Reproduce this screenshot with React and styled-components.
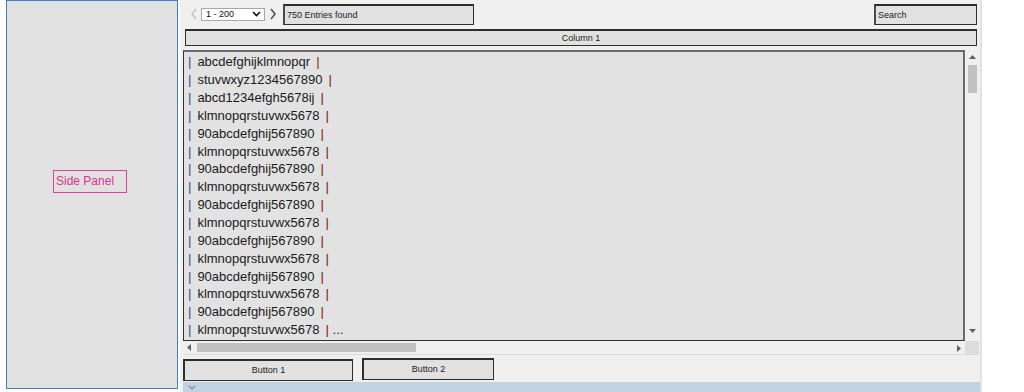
import styled, { createGlobalStyle } from "styled-components";

const GlobalStyle = createGlobalStyle`
  html, body {
    margin: 0;
    padding: 0;
    background: #ffffff;
    font-family: "Liberation Sans", Arial, sans-serif;
  }
`;

const Page = styled.div`
  display: flex;
  width: 1024px;
  height: 392px;
  padding-left: 6px;
  box-sizing: border-box;
  overflow: hidden;
`;

const SidePanel = styled.div`
  width: 172px;
  height: 389px;
  box-sizing: border-box;
  border: 1px solid #3f7fc4;
  background: #e1e1e1;
  display: flex;
  align-items: center;
  padding-left: 46px;
  flex-shrink: 0;
`;

const SideLabel = styled.div`
  border: 1px solid #e0409a;
  color: #e0308f;
  font-size: 12px;
  padding: 3px 12px 4px 2px;
  margin-top: -26px;
`;

const Main = styled.div`
  width: 802px;
  margin-left: 2px;
  height: 392px;
  background: #f0f0f0;
  border-right: 2px solid #e2e2e2;
  display: flex;
  flex-direction: column;
  padding-left: 3px;
  box-sizing: border-box;
  flex-shrink: 0;
`;

const Toolbar = styled.div`
  height: 29px;
  display: flex;
  align-items: center;
  padding-right: 3px;
`;

const Arrow = styled.span`
  width: 10px;
  height: 14px;
  display: flex;
  align-items: center;
  justify-content: center;
  margin: 0 ${(p) => p.$gap}px 0 ${(p) => p.$lead}px;
`;

const Select = styled.div`
  width: 64px;
  height: 13px;
  box-sizing: border-box;
  background: #ffffff;
  border: 1px solid #a8a8a8;
  font-size: 9px;
  display: flex;
  align-items: center;
  justify-content: space-between;
  padding: 0 3px 0 4px;
  color: #111;
`;

const FieldBox = styled.div`
  width: ${(p) => p.$w}px;
  height: 21px;
  box-sizing: border-box;
  border: 1px solid #2e2e2e;
  border-left-width: 2px;
  border-top-width: 2px;
  border-left-color: #4a4a4a;
  background: #e1e1e1;
  font-size: 9px;
  color: #222;
  display: flex;
  align-items: center;
  padding-left: 2px;
  margin-left: ${(p) => p.$ml || 0}px;
`;

const Spacer = styled.div`
  flex: 1;
`;

const Header = styled.div`
  height: 17px;
  margin: 1px 3px 0 2px;
  box-sizing: border-box;
  border: 1px solid #2e2e2e;
  border-top-width: 2px;
  background: #e1e1e1;
  font-size: 9px;
  color: #222;
  display: flex;
  align-items: center;
  justify-content: center;
`;

const ListArea = styled.div`
  margin-top: 4px;
  display: grid;
  grid-template-columns: 782px 14px;
  grid-template-rows: 291px 14px;
`;

const List = styled.div`
  box-sizing: border-box;
  border: 1px solid #303030;
  border-top: 2px solid #6a6a6a;
  border-right: 2px solid #6a6a6a;
  background: #e2e2e2;
  padding: 1px 0 0 4px;
  overflow: hidden;
`;

const Row = styled.div`
  height: 17.87px;
  display: flex;
  align-items: center;
  font-size: 13px;
  color: #1a1a1a;
  white-space: nowrap;
`;

const Pipe = styled.span`
  color: ${(p) => p.$c};
  margin: 0 ${(p) => p.$r}px 0 ${(p) => p.$l}px;
`;

const VScroll = styled.div`
  background: #f0f0f0;
  display: flex;
  flex-direction: column;
  align-items: center;
  padding-top: 4px;
`;

const VThumb = styled.div`
  width: 9px;
  height: 28px;
  margin-top: 4px;
  background: #c1c1c1;
`;

const HScroll = styled.div`
  background: #f0f0f0;
  border-bottom: 1px solid #dadada;
  display: flex;
  align-items: center;
  padding-left: 3px;
`;

const HThumb = styled.div`
  width: 219px;
  height: 9px;
  margin-left: 4px;
  background: #c1c1c1;
`;

const Corner = styled.div`
  background: #dcdcdc;
`;

const ButtonRow = styled.div`
  display: flex;
  gap: 9px;
  margin-top: 2px;
  height: 25px;
  align-items: flex-start;
`;

const Button = styled.button`
  width: ${(p) => p.$w}px;
  height: 22px;
  margin-top: ${(p) => p.$mt}px;
  box-sizing: border-box;
  border: 1px solid #2e2e2e;
  border-left-width: 2px;
  border-top-width: 2px;
  background: #e1e1e1;
  font-family: "Liberation Sans", Arial, sans-serif;
  font-size: 9px;
  color: #222;
  padding: 0;
`;

const BottomBar = styled.div`
  margin-top: 1px;
  margin-right: 0;
  height: 10px;
  background: #c1d3e1;
  display: flex;
  align-items: center;
  padding-left: 5px;
`;

const rows = [
  "abcdefghijklmnopqr",
  "stuvwxyz1234567890",
  "abcd1234efgh5678ij",
  "klmnopqrstuvwx5678",
  "90abcdefghij567890",
  "klmnopqrstuvwx5678",
  "90abcdefghij567890",
  "klmnopqrstuvwx5678",
  "90abcdefghij567890",
  "klmnopqrstuvwx5678",
  "90abcdefghij567890",
  "klmnopqrstuvwx5678",
  "90abcdefghij567890",
  "klmnopqrstuvwx5678",
  "90abcdefghij567890",
  "klmnopqrstuvwx5678",
];

function Chevron({ dir, color }) {
  const d = dir === "left" ? "M6 1 L2 6 L6 11" : "M2 1 L6 6 L2 11";
  return (
    <svg width="8" height="12" viewBox="0 0 8 12">
      <path d={d} fill="none" stroke={color} strokeWidth="1.6" />
    </svg>
  );
}

function Tri({ dir, size = 7 }) {
  const pts = {
    up: "0,5 3.5,1 7,5",
    down: "0,2 3.5,6 7,2",
    left: "5,0 1,3.5 5,7",
    right: "2,0 6,3.5 2,7",
  }[dir];
  return (
    <svg width={size} height={size} viewBox="0 0 7 7">
      <polygon points={pts} fill="#606060" />
    </svg>
  );
}

export default function App() {
  return (
    <>
      <GlobalStyle />
      <Page>
        <SidePanel>
          <SideLabel>Side Panel</SideLabel>
        </SidePanel>
        <Main>
          <Toolbar>
            <Arrow $lead={6} $gap={2}>
              <Chevron dir="left" color="#c4c4c4" />
            </Arrow>
            <Select>
              <span>1 - 200</span>
              <svg width="9" height="6" viewBox="0 0 9 6">
                <path d="M1 1 L4.5 4.5 L8 1" fill="none" stroke="#111" strokeWidth="1.6" />
              </svg>
            </Select>
            <Arrow $lead={3} $gap={5}>
              <Chevron dir="right" color="#555" />
            </Arrow>
            <FieldBox $w={191}>750 Entries found</FieldBox>
            <Spacer />
            <FieldBox $w={103}>Search</FieldBox>
          </Toolbar>
          <Header>Column 1</Header>
          <ListArea>
            <List>
              {rows.map((r, i) => (
                <Row key={i}>
                  <Pipe $c="#2b4f8f" $l={0} $r={6}>|</Pipe>
                  {r}
                  <Pipe $c="#7a1a10" $l={6} $r={0}>|</Pipe>
                  {i === rows.length - 1 && <span>&nbsp;...</span>}
                </Row>
              ))}
            </List>
            <VScroll>
              <Tri dir="up" />
              <VThumb />
              <Spacer />
              <div style={{ marginBottom: 3 }}>
                <Tri dir="down" />
              </div>
            </VScroll>
            <HScroll>
              <Tri dir="left" />
              <HThumb />
              <Spacer />
              <div style={{ marginRight: 3 }}>
                <Tri dir="right" />
              </div>
            </HScroll>
            <Corner />
          </ListArea>
          <ButtonRow>
            <Button $w={170} $mt={2}>Button 1</Button>
            <Button $w={132} $mt={1}>Button 2</Button>
          </ButtonRow>
          <BottomBar>
            <svg width="8" height="5" viewBox="0 0 8 5">
              <path d="M1 1 L4 4 L7 1" fill="none" stroke="#7a8a9a" strokeWidth="1.2" />
            </svg>
          </BottomBar>
        </Main>
      </Page>
    </>
  );
}
